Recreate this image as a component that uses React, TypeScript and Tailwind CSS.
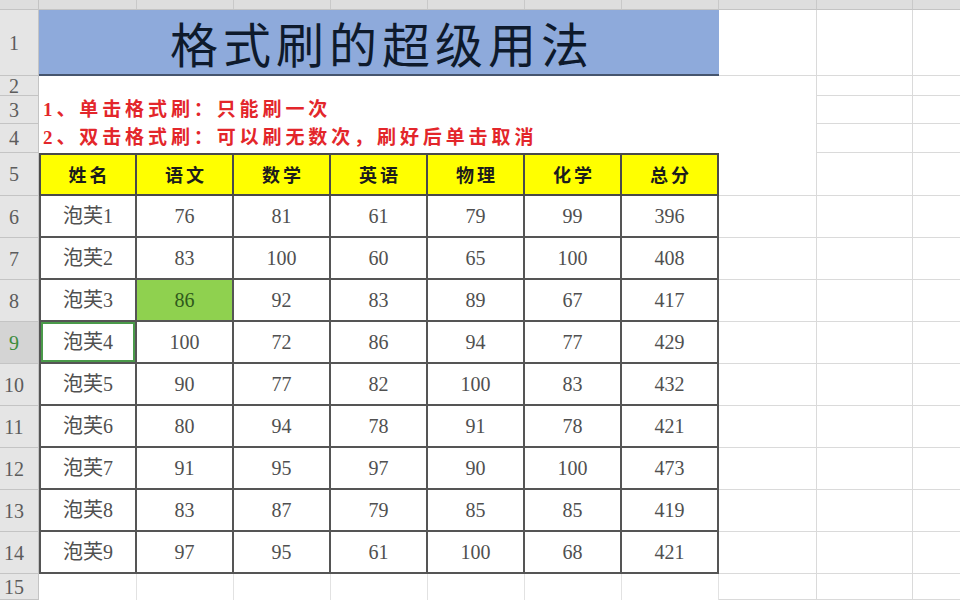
const header = ["姓名", "语文", "数学", "英语", "物理", "化学", "总分"];

const rows: (string | number)[][] = [
  ["泡芙1", 76, 81, 61, 79, 99, 396],
  ["泡芙2", 83, 100, 60, 65, 100, 408],
  ["泡芙3", 86, 92, 83, 89, 67, 417],
  ["泡芙4", 100, 72, 86, 94, 77, 429],
  ["泡芙5", 90, 77, 82, 100, 83, 432],
  ["泡芙6", 80, 94, 78, 91, 78, 421],
  ["泡芙7", 91, 95, 97, 90, 100, 473],
  ["泡芙8", 83, 87, 79, 85, 85, 419],
  ["泡芙9", 97, 95, 61, 100, 68, 421],
];

const cols = [0, 1, 2, 3, 4, 5, 6];

function RowNum({ n, active }: { n: number; active?: boolean }) {
  return (
    <div
      className={
        "w-[39px] shrink-0 flex items-center justify-center pr-[10px] border-r border-b border-[#c4c4c4] text-[20px] font-['Liberation_Serif',serif] " +
        (active ? "bg-[#d4d4d4] text-[#3c8c3c]" : "bg-[#e5e5e5] text-[#5c5c5c]")
      }
    >
      {n}
    </div>
  );
}

// right side columns H, I, J
function Tail({ lines = true }: { lines?: boolean }) {
  return (
    <>
      <div className={"w-[98px] shrink-0 border-r border-[#dadada] " + (lines ? "border-b" : "")} />
      <div className="w-[96px] shrink-0 border-r border-b border-[#dadada]" />
      <div className="flex-1 border-b border-[#dadada]" />
    </>
  );
}

export default function App() {
  return (
    <div className="w-[960px] h-[600px] overflow-hidden bg-white font-['Liberation_Serif','Noto_Sans_CJK_SC',serif]">
      {/* column header strip, scrolled almost out of view */}
      <div className="flex h-[10px] bg-[#dedede] border-b border-[#c4c4c4]">
        <div className="w-[39px] shrink-0 border-r border-[#c4c4c4]" />
        {cols.map((i) => (
          <div key={i} className={(i === 0 ? "w-[98px]" : "w-[97px]") + " shrink-0 border-r border-[#c9c9c9]"} />
        ))}
        <div className="w-[98px] shrink-0 border-r border-[#c9c9c9]" />
        <div className="w-[96px] shrink-0 border-r border-[#c9c9c9]" />
        <div className="flex-1" />
      </div>

      {/* row 1: title */}
      <div className="flex h-[66px]">
        <RowNum n={1} />
        <div className="w-[680px] shrink-0 bg-[#8eaadb] border-b-2 border-[#46556e] flex items-center justify-center pl-[6px] text-[48px] tracking-[5px] text-[#0e1a2c] font-['Noto_Sans_CJK_SC',sans-serif]">
          格式刷的超级用法
        </div>
        <Tail lines />
      </div>

      {/* row 2 */}
      <div className="flex h-[20px]">
        <RowNum n={2} />
        <div className="w-[680px] shrink-0" />
        <Tail lines={false} />
      </div>

      {/* rows 3-4: notes */}
      <div className="flex h-[28px]">
        <RowNum n={3} />
        <div className="w-[680px] shrink-0 flex items-center pl-[4px] text-[19px] font-bold tracking-[3.9px] text-[#e3262b] font-['Liberation_Serif','Noto_Sans_CJK_SC',serif]">
          1、单击格式刷：只能刷一次
        </div>
        <Tail lines={false} />
      </div>
      <div className="flex h-[29px]">
        <RowNum n={4} />
        <div className="w-[680px] shrink-0 flex items-center pl-[4px] text-[19px] font-bold tracking-[3.9px] text-[#e3262b] font-['Liberation_Serif','Noto_Sans_CJK_SC',serif]">
          2、双击格式刷：可以刷无数次，刷好后单击取消
        </div>
        <Tail lines={false} />
      </div>

      {/* row 5: header */}
      <div className="flex h-[43px]">
        <RowNum n={5} />
        {header.map((h, i) => (
          <div
            key={h}
            className={
              (i === 0 ? "w-[98px] border-l-2" : "w-[97px]") +
              " shrink-0 bg-[#ffff00] border-t-2 border-r-2 border-b-2 border-[#4a4a4a] flex items-center justify-center pl-[3px] text-[18px] font-bold tracking-[3px] text-[#1c1c1c] font-['Noto_Sans_CJK_SC',sans-serif]"
            }
          >
            {h}
          </div>
        ))}
        <Tail lines />
      </div>

      {/* rows 6-14: data */}
      {rows.map((r, ri) => (
        <div key={ri} className="flex h-[42px]">
          <RowNum n={ri + 6} active={ri === 3} />
          {r.map((v, ci) => {
            const green = ri === 2 && ci === 1;
            const selected = ri === 3 && ci === 0;
            return (
              <div
                key={ci}
                className={
                  (ci === 0 ? "w-[98px] border-l-2" : "w-[97px]") +
                  " shrink-0 border-r-2 border-b-2 border-[#555] flex items-center justify-center text-[20px] " +
                  (green ? "bg-[#8fd14f] text-[#2f5a1c] " : "text-[#505050] ") +
                  (selected ? "ring-2 ring-inset ring-[#4a9a4a]" : "")
                }
              >
                {v}
              </div>
            );
          })}
          <Tail lines />
        </div>
      ))}

      {/* row 15 */}
      <div className="flex h-[26px]">
        <RowNum n={15} />
        {cols.map((i) => (
          <div key={i} className={(i === 0 ? "w-[98px]" : "w-[97px]") + " shrink-0 border-r border-[#e2e2e2]"} />
        ))}
        <Tail lines />
      </div>
    </div>
  );
}
